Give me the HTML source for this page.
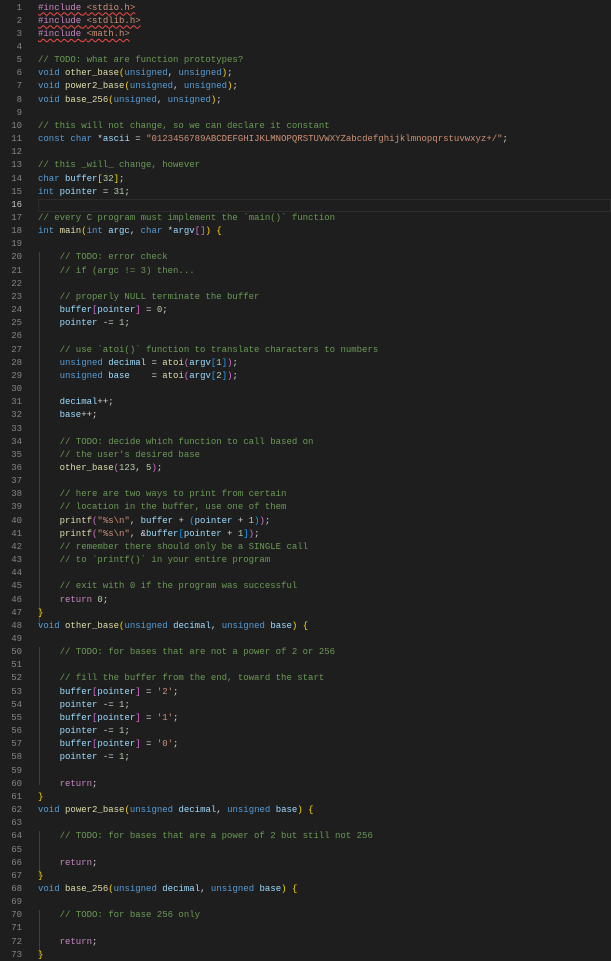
<!DOCTYPE html>
<html><head><meta charset="utf-8"><style>
html,body{margin:0;padding:0;background:#1e1e1e;width:611px;height:961px;overflow:hidden}
#ed{position:relative;top:1.5px;font-family:"Liberation Mono",monospace;font-size:9px;color:#d4d4d4}
.l{position:relative;height:13.17px;line-height:13.17px;white-space:pre}
.ln{position:absolute;left:0;width:22px;text-align:right;color:#858585}
.t{position:absolute;left:38px}
.cur{position:absolute;left:38px;right:0;top:0;height:11.5px;border:1px solid #2c2c2c}
.g{position:absolute;left:39px;width:1px;background:#404040}
.k{color:#569cd6}.f{color:#dcdcaa}.v{color:#9cdcfe}.c{color:#6a9955}.s{color:#ce9178}.n{color:#b5cea8}.p{color:#c586c0}.y{color:#ffd700}.b{color:#179fff}.o{color:#da70d6}
.sq{text-decoration:underline wavy #f14c4c;text-decoration-thickness:1px;text-underline-offset:2px}
</style></head><body><div id="ed">
<div class="g" style="top:250px;height:375px"></div>
<div class="g" style="top:645px;height:138px"></div>
<div class="g" style="top:829px;height:46px"></div>
<div class="g" style="top:908px;height:46px"></div>
<div class="l"><span class="ln">1</span><span class="t sq"><span class="p">#include</span> <span class="s">&lt;stdio.h&gt;</span></span></div>
<div class="l"><span class="ln">2</span><span class="t sq"><span class="p">#include</span> <span class="s">&lt;stdlib.h&gt;</span></span></div>
<div class="l"><span class="ln">3</span><span class="t sq"><span class="p">#include</span> <span class="s">&lt;math.h&gt;</span></span></div>
<div class="l"><span class="ln">4</span></div>
<div class="l"><span class="ln">5</span><span class="t c">// TODO: what are function prototypes?</span></div>
<div class="l"><span class="ln">6</span><span class="t"><span class="k">void</span> <span class="f">other_base</span><span class="y">(</span><span class="k">unsigned</span>, <span class="k">unsigned</span><span class="y">)</span>;</span></div>
<div class="l"><span class="ln">7</span><span class="t"><span class="k">void</span> <span class="f">power2_base</span><span class="y">(</span><span class="k">unsigned</span>, <span class="k">unsigned</span><span class="y">)</span>;</span></div>
<div class="l"><span class="ln">8</span><span class="t"><span class="k">void</span> <span class="f">base_256</span><span class="y">(</span><span class="k">unsigned</span>, <span class="k">unsigned</span><span class="y">)</span>;</span></div>
<div class="l"><span class="ln">9</span></div>
<div class="l"><span class="ln">10</span><span class="t c">// this will not change, so we can declare it constant</span></div>
<div class="l"><span class="ln">11</span><span class="t"><span class="k">const</span> <span class="k">char</span> *<span class="v">ascii</span> = <span class="s">"0123456789ABCDEFGHIJKLMNOPQRSTUVWXYZabcdefghijklmnopqrstuvwxyz+/"</span>;</span></div>
<div class="l"><span class="ln">12</span></div>
<div class="l"><span class="ln">13</span><span class="t c">// this _will_ change, however</span></div>
<div class="l"><span class="ln">14</span><span class="t"><span class="k">char</span> <span class="v">buffer</span><span class="y">[</span><span class="n">32</span><span class="y">]</span>;</span></div>
<div class="l"><span class="ln">15</span><span class="t"><span class="k">int</span> <span class="v">pointer</span> = <span class="n">31</span>;</span></div>
<div class="l"><div class="cur"></div><span class="ln" style="color:#c6c6c6">16</span></div>
<div class="l"><span class="ln">17</span><span class="t c">// every C program must implement the `main()` function</span></div>
<div class="l"><span class="ln">18</span><span class="t"><span class="k">int</span> <span class="f">main</span><span class="y">(</span><span class="k">int</span> <span class="v">argc</span>, <span class="k">char</span> *<span class="v">argv</span><span class="o">[]</span><span class="y">)</span> <span class="y">{</span></span></div>
<div class="l"><span class="ln">19</span></div>
<div class="l"><span class="ln">20</span><span class="t c">    // TODO: error check</span></div>
<div class="l"><span class="ln">21</span><span class="t c">    // if (argc != 3) then...</span></div>
<div class="l"><span class="ln">22</span></div>
<div class="l"><span class="ln">23</span><span class="t c">    // properly NULL terminate the buffer</span></div>
<div class="l"><span class="ln">24</span><span class="t">    <span class="v">buffer</span><span class="o">[</span><span class="v">pointer</span><span class="o">]</span> = <span class="n">0</span>;</span></div>
<div class="l"><span class="ln">25</span><span class="t">    <span class="v">pointer</span> -= <span class="n">1</span>;</span></div>
<div class="l"><span class="ln">26</span></div>
<div class="l"><span class="ln">27</span><span class="t c">    // use `atoi()` function to translate characters to numbers</span></div>
<div class="l"><span class="ln">28</span><span class="t">    <span class="k">unsigned</span> <span class="v">decimal</span> = <span class="f">atoi</span><span class="o">(</span><span class="v">argv</span><span class="b">[</span><span class="n">1</span><span class="b">]</span><span class="o">)</span>;</span></div>
<div class="l"><span class="ln">29</span><span class="t">    <span class="k">unsigned</span> <span class="v">base</span>    = <span class="f">atoi</span><span class="o">(</span><span class="v">argv</span><span class="b">[</span><span class="n">2</span><span class="b">]</span><span class="o">)</span>;</span></div>
<div class="l"><span class="ln">30</span></div>
<div class="l"><span class="ln">31</span><span class="t">    <span class="v">decimal</span>++;</span></div>
<div class="l"><span class="ln">32</span><span class="t">    <span class="v">base</span>++;</span></div>
<div class="l"><span class="ln">33</span></div>
<div class="l"><span class="ln">34</span><span class="t c">    // TODO: decide which function to call based on</span></div>
<div class="l"><span class="ln">35</span><span class="t c">    // the user's desired base</span></div>
<div class="l"><span class="ln">36</span><span class="t">    <span class="f">other_base</span><span class="o">(</span><span class="n">123</span>, <span class="n">5</span><span class="o">)</span>;</span></div>
<div class="l"><span class="ln">37</span></div>
<div class="l"><span class="ln">38</span><span class="t c">    // here are two ways to print from certain</span></div>
<div class="l"><span class="ln">39</span><span class="t c">    // location in the buffer, use one of them</span></div>
<div class="l"><span class="ln">40</span><span class="t">    <span class="f">printf</span><span class="o">(</span><span class="s">"%s\n"</span>, <span class="v">buffer</span> + <span class="b">(</span><span class="v">pointer</span> + <span class="n">1</span><span class="b">)</span><span class="o">)</span>;</span></div>
<div class="l"><span class="ln">41</span><span class="t">    <span class="f">printf</span><span class="o">(</span><span class="s">"%s\n"</span>, &amp;<span class="v">buffer</span><span class="b">[</span><span class="v">pointer</span> + <span class="n">1</span><span class="b">]</span><span class="o">)</span>;</span></div>
<div class="l"><span class="ln">42</span><span class="t c">    // remember there should only be a SINGLE call</span></div>
<div class="l"><span class="ln">43</span><span class="t c">    // to `printf()` in your entire program</span></div>
<div class="l"><span class="ln">44</span></div>
<div class="l"><span class="ln">45</span><span class="t c">    // exit with 0 if the program was successful</span></div>
<div class="l"><span class="ln">46</span><span class="t">    <span class="p">return</span> <span class="n">0</span>;</span></div>
<div class="l"><span class="ln">47</span><span class="t y">}</span></div>
<div class="l"><span class="ln">48</span><span class="t"><span class="k">void</span> <span class="f">other_base</span><span class="y">(</span><span class="k">unsigned</span> <span class="v">decimal</span>, <span class="k">unsigned</span> <span class="v">base</span><span class="y">)</span> <span class="y">{</span></span></div>
<div class="l"><span class="ln">49</span></div>
<div class="l"><span class="ln">50</span><span class="t c">    // TODO: for bases that are not a power of 2 or 256</span></div>
<div class="l"><span class="ln">51</span></div>
<div class="l"><span class="ln">52</span><span class="t c">    // fill the buffer from the end, toward the start</span></div>
<div class="l"><span class="ln">53</span><span class="t">    <span class="v">buffer</span><span class="o">[</span><span class="v">pointer</span><span class="o">]</span> = <span class="s">'2'</span>;</span></div>
<div class="l"><span class="ln">54</span><span class="t">    <span class="v">pointer</span> -= <span class="n">1</span>;</span></div>
<div class="l"><span class="ln">55</span><span class="t">    <span class="v">buffer</span><span class="o">[</span><span class="v">pointer</span><span class="o">]</span> = <span class="s">'1'</span>;</span></div>
<div class="l"><span class="ln">56</span><span class="t">    <span class="v">pointer</span> -= <span class="n">1</span>;</span></div>
<div class="l"><span class="ln">57</span><span class="t">    <span class="v">buffer</span><span class="o">[</span><span class="v">pointer</span><span class="o">]</span> = <span class="s">'0'</span>;</span></div>
<div class="l"><span class="ln">58</span><span class="t">    <span class="v">pointer</span> -= <span class="n">1</span>;</span></div>
<div class="l"><span class="ln">59</span></div>
<div class="l"><span class="ln">60</span><span class="t">    <span class="p">return</span>;</span></div>
<div class="l"><span class="ln">61</span><span class="t y">}</span></div>
<div class="l"><span class="ln">62</span><span class="t"><span class="k">void</span> <span class="f">power2_base</span><span class="y">(</span><span class="k">unsigned</span> <span class="v">decimal</span>, <span class="k">unsigned</span> <span class="v">base</span><span class="y">)</span> <span class="y">{</span></span></div>
<div class="l"><span class="ln">63</span></div>
<div class="l"><span class="ln">64</span><span class="t c">    // TODO: for bases that are a power of 2 but still not 256</span></div>
<div class="l"><span class="ln">65</span></div>
<div class="l"><span class="ln">66</span><span class="t">    <span class="p">return</span>;</span></div>
<div class="l"><span class="ln">67</span><span class="t y">}</span></div>
<div class="l"><span class="ln">68</span><span class="t"><span class="k">void</span> <span class="f">base_256</span><span class="y">(</span><span class="k">unsigned</span> <span class="v">decimal</span>, <span class="k">unsigned</span> <span class="v">base</span><span class="y">)</span> <span class="y">{</span></span></div>
<div class="l"><span class="ln">69</span></div>
<div class="l"><span class="ln">70</span><span class="t c">    // TODO: for base 256 only</span></div>
<div class="l"><span class="ln">71</span></div>
<div class="l"><span class="ln">72</span><span class="t">    <span class="p">return</span>;</span></div>
<div class="l"><span class="ln">73</span><span class="t y">}</span></div>
</div></body></html>
